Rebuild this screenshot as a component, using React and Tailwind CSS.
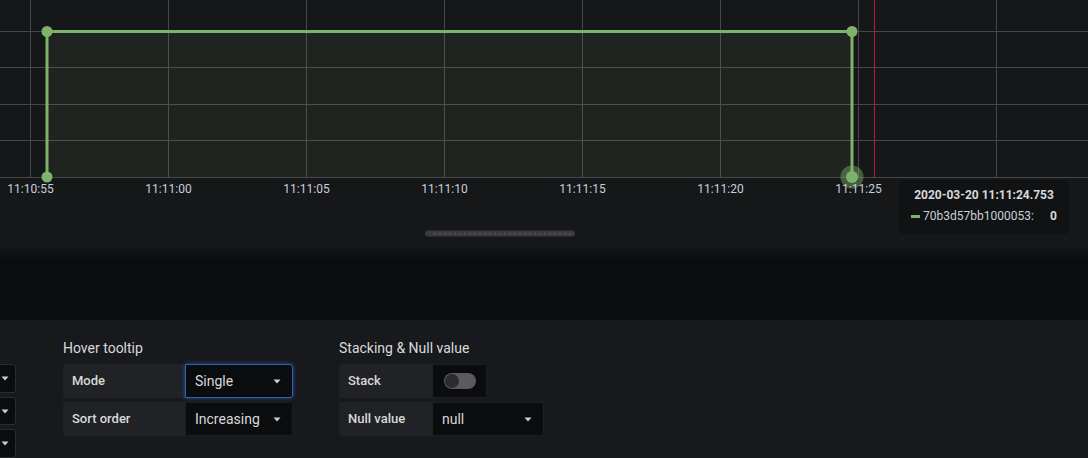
import React from "react";

const xs = [30, 168, 306, 444, 582, 720, 858, 996];
const labels = ["11:10:55", "11:11:00", "11:11:05", "11:11:10", "11:11:15", "11:11:20", "11:11:25"];
const ys = [31, 67, 104, 140, 177];

function Caret() {
  return (
    <svg width="8" height="5" viewBox="0 0 8 5" className="shrink-0">
      <path d="M0.5 0.5 L7.5 0.5 L4 4.5 Z" fill="#c7d0d9" />
    </svg>
  );
}

function Chart() {
  const dots = [];
  for (let i = 0; i < 28; i++) dots.push(434 + i * 5);
  return (
    <svg width="1088" height="245" className="block">
      {xs.map((x) => (
        <line key={"v" + x} x1={x + 0.5} y1="0" x2={x + 0.5} y2="177" stroke="#47484a" strokeWidth="1" />
      ))}
      {ys.map((y) => (
        <line key={"h" + y} x1="0" y1={y + 0.5} x2="1088" y2={y + 0.5} stroke="#47484a" strokeWidth="1" />
      ))}
      <rect x="47" y="31" width="805" height="146" fill="#7eb26d" fillOpacity="0.09" />
      <line x1="874.5" y1="0" x2="874.5" y2="177" stroke="#c4162a" strokeWidth="1" />
      <polyline points="47,177 47,31.5 852,31.5 852,177" fill="none" stroke="#7eb26d" strokeWidth="3" />
      <circle cx="47" cy="31.5" r="5.5" fill="#7eb26d" />
      <circle cx="47" cy="177" r="5.5" fill="#7eb26d" />
      <circle cx="852" cy="31.5" r="5.5" fill="#7eb26d" />
      <circle cx="852" cy="177" r="11.5" fill="#7eb26d" fillOpacity="0.45" />
      <circle cx="852" cy="177" r="6" fill="#7eb26d" />
      {labels.map((l, i) => (
        <text key={l} x={xs[i] + 0.5} y="192.5" textAnchor="middle" fontSize="12" fill="#c7d0d9" fontFamily="Roboto, sans-serif">
          {l}
        </text>
      ))}
      <rect x="425" y="230.5" width="150" height="6" rx="3" fill="#3a3b3e" />
      {dots.map((d) => (
        <rect key={d} x={d} y="233" width="2" height="1.5" fill="#55565a" />
      ))}
    </svg>
  );
}

function Label({ children, w }) {
  return (
    <div className={`${w} h-[34px] flex items-center px-[9px] bg-[#202226] rounded-l-[3px] text-[13px] font-medium text-[#d8d9da]`}>
      {children}
    </div>
  );
}

function Select({ w, value, focus }) {
  return (
    <div
      className={`${w} h-[34px] flex items-center justify-between pl-[9px] pr-[11px] bg-[#0b0c0e] rounded-r-[3px] text-[14px] text-[#d8d9da] border ${
        focus ? "border-[#2a63b8] shadow-[0_0_4px_rgba(61,113,217,0.6)]" : "border-[#1d1e21]"
      }`}
    >
      <span>{value}</span>
      <Caret />
    </div>
  );
}

export default function App() {
  return (
    <div className="w-[1088px] h-[458px] overflow-hidden bg-[#161719] font-['Roboto',sans-serif]">
      <div className="relative h-[245px]">
        <Chart />
        <div className="absolute left-[899px] top-[180px] w-[170px] h-[54px] bg-[#111214] rounded-[4px] px-[12px] pt-[7px]">
          <div className="text-center text-[12px] font-bold text-[#d8d9da] leading-[16px]">2020-03-20 11:11:24.753</div>
          <div className="flex items-center mt-[5px] text-[12px] text-[#c7d0d9] leading-[16px]">
            <span className="w-[9px] h-[3px] bg-[#7eb26d] mr-[3px]" />
            <span>70b3d57bb1000053:</span>
            <span className="ml-auto font-bold text-[#d8d9da]">0</span>
          </div>
        </div>
      </div>
      <div className="h-[17px] bg-gradient-to-b from-[#161719] to-[#0b0c0e]" />
      <div className="h-[58px] bg-[#0b0c0e]" />
      <div className="h-[138px] bg-[#18191c] flex pt-[19px]">
        <div className="w-[16px] flex flex-col gap-[4px] pt-[25px] mr-[47px]">
          {[0, 1, 2].map((i) => (
            <div key={i} className="h-[34px] bg-[#0b0c0e] border border-l-0 border-[#2a2b2f] rounded-r-[3px] flex items-center pl-[1px]">
              <Caret />
            </div>
          ))}
        </div>
        <div className="w-[276px] flex flex-col">
          <div className="text-[14px] text-[#d8d9da] leading-[20px] h-[25px] -mt-[1px]">Hover tooltip</div>
          <div className="flex flex-col gap-[4px] mt-[1px]">
            <div className="flex">
              <Label w="w-[122px]">Mode</Label>
              <Select w="w-[108px]" value="Single" focus />
            </div>
            <div className="flex">
              <Label w="w-[122px]">Sort order</Label>
              <Select w="w-[108px]" value="Increasing" />
            </div>
          </div>
        </div>
        <div className="flex flex-col">
          <div className="text-[14px] text-[#d8d9da] leading-[20px] h-[25px] -mt-[1px]">Stacking &amp; Null value</div>
          <div className="flex flex-col gap-[4px] mt-[1px]">
            <div className="flex">
              <Label w="w-[93px]">Stack</Label>
              <div className="w-[55px] h-[34px] bg-[#0b0c0e] border border-[#1d1e21] rounded-r-[3px] flex items-center pl-[11px]">
                <div className="w-[32px] h-[16px] rounded-full bg-[#5b5b5e] flex items-center pl-[1px]">
                  <div className="w-[14px] h-[14px] rounded-full bg-[#2b2c2f]" />
                </div>
              </div>
            </div>
            <div className="flex">
              <Label w="w-[93px]">Null value</Label>
              <Select w="w-[112px]" value="null" />
            </div>
          </div>
        </div>
      </div>
    </div>
  );
}
